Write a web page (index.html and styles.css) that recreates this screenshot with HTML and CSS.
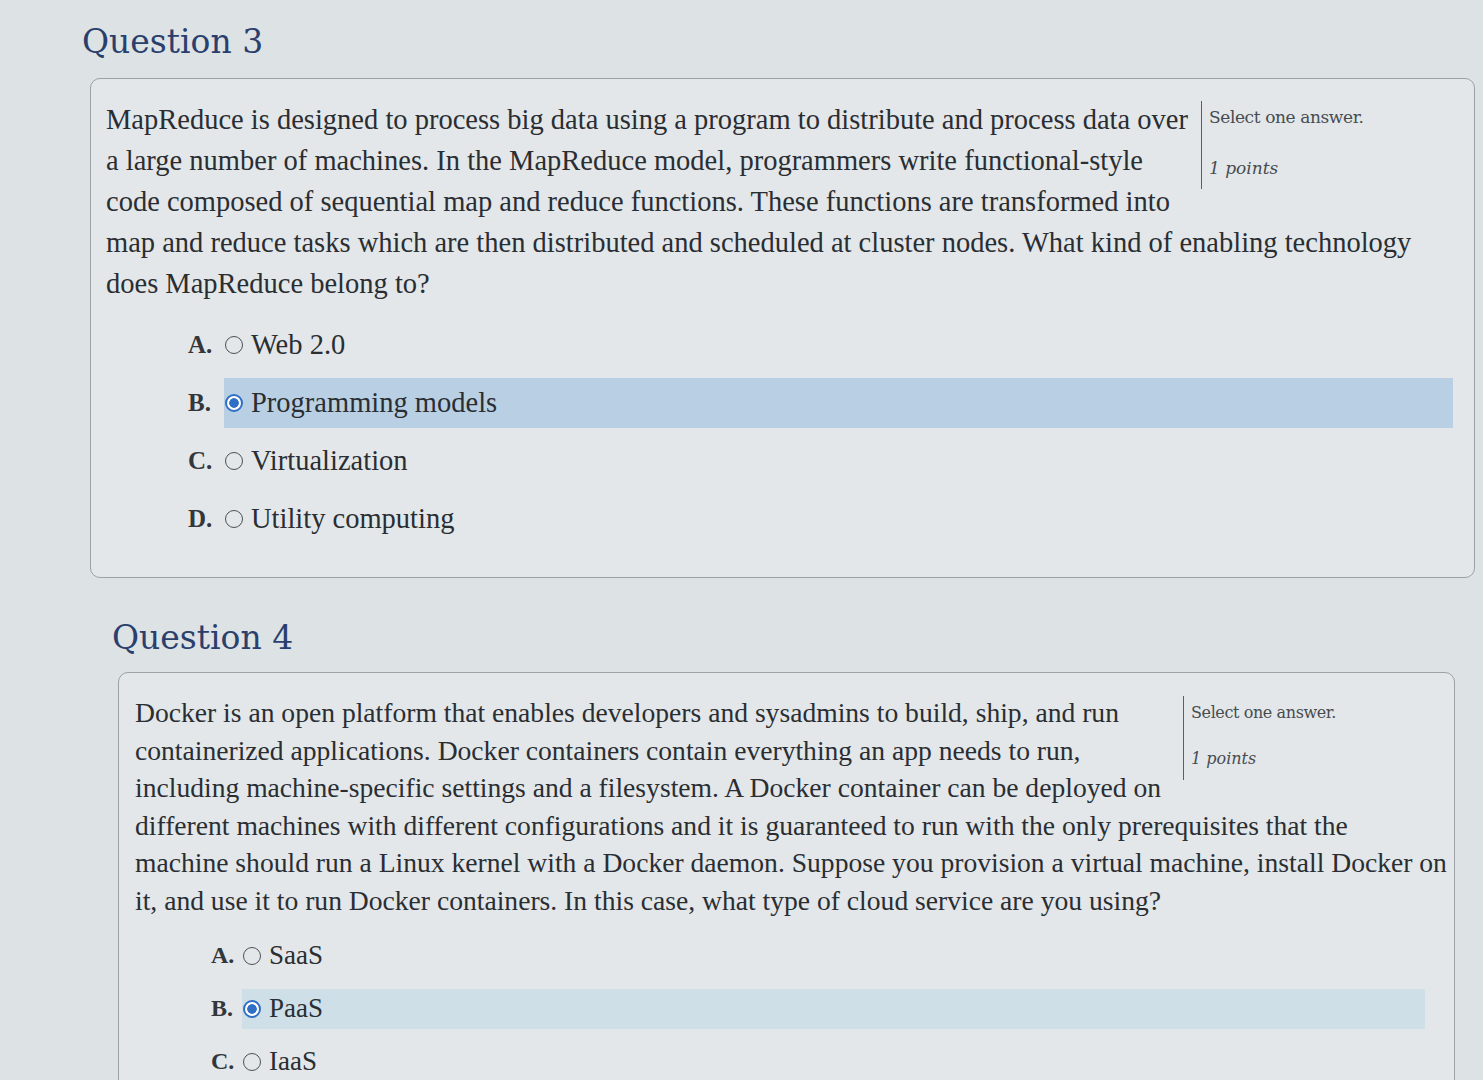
FILE: index.html
```html
<!DOCTYPE html>
<html lang="en">
<head>
<meta charset="UTF-8">
<meta name="viewport" content="width=device-width, initial-scale=1.0">
<link rel="stylesheet" href="styles.css">
</head>
<body>
    <div class="quiz">
        <div class="question">
            <h2 class="q-title">Question 3</h2>
            <div class="q-card">
                <div class="q-info">
                    <p class="q-hint">Select one answer.</p>
                    <p class="q-points">1 points</p>
                </div>
                <p class="q-text">MapReduce is designed to process big data using a program to distribute and process data over a large number of machines. In the MapReduce model, programmers write functional-style code composed of sequential map and reduce functions. These functions are transformed into map and reduce tasks which are then distributed and scheduled at cluster nodes. What kind of enabling technology does MapReduce belong to?</p>
                <div class="options">
                    <div class="option">
                        <span class="opt-letter">A.</span>
                        <label class="opt-body"><span class="radio"></span>Web 2.0</label>
                    </div>
                    <div class="option selected">
                        <span class="opt-letter">B.</span>
                        <label class="opt-body"><span class="radio"></span>Programming models</label>
                    </div>
                    <div class="option">
                        <span class="opt-letter">C.</span>
                        <label class="opt-body"><span class="radio"></span>Virtualization</label>
                    </div>
                    <div class="option">
                        <span class="opt-letter">D.</span>
                        <label class="opt-body"><span class="radio"></span>Utility computing</label>
                    </div>
                </div>
            </div>
        </div>

        <div class="question second">
            <h2 class="q-title">Question 4</h2>
            <div class="q-card">
                <div class="q-info">
                    <p class="q-hint">Select one answer.</p>
                    <p class="q-points">1 points</p>
                </div>
                <p class="q-text">Docker is an open platform that enables developers and sysadmins to build, ship, and run containerized applications. Docker containers contain everything an app needs to run, including machine-specific settings and a filesystem. A Docker container can be deployed on different machines with different configurations and it is guaranteed to run with the only prerequisites that the machine should run a Linux kernel with a Docker daemon. Suppose you provision a virtual machine, install Docker on it, and use it to run Docker containers. In this case, what type of cloud service are you using?</p>
                <div class="options">
                    <div class="option">
                        <span class="opt-letter">A.</span>
                        <label class="opt-body"><span class="radio"></span>SaaS</label>
                    </div>
                    <div class="option selected">
                        <span class="opt-letter">B.</span>
                        <label class="opt-body"><span class="radio"></span>PaaS</label>
                    </div>
                    <div class="option">
                        <span class="opt-letter">C.</span>
                        <label class="opt-body"><span class="radio"></span>IaaS</label>
                    </div>
                </div>
            </div>
        </div>
    </div>
</body>
</html>
```

FILE: styles.css
```css
body {
    margin: 0;
    background-color: #dde2e5;
    font-family: "Liberation Serif", "Times New Roman", serif;
    color: #2a2e33;
    overflow: hidden;
}

.quiz {
    padding: 22px 8px 0 82px;
}

.q-title {
    font-family: "DejaVu Serif", serif;
    font-weight: normal;
    font-size: 33px;
    line-height: 39px;
    color: #2a3f6c;
    margin: 0 0 17px 0;
}

.q-card {
    margin-left: 8px;
    border: 1px solid #9ba1a6;
    border-radius: 10px;
    background-color: #e3e7e9;
    padding: 20px 21px 29px 15px;
}

/* right column with hint and points */
.q-info {
    float: right;
    width: 244px;
    margin: 2px 0 10px 5px;
    padding: 5px 0 10px 7px;
    border-left: 1px solid #5b5f63;
}

.q-hint {
    margin: 0;
    font-family: "DejaVu Serif", serif;
    font-size: 17px;
    line-height: 22px;
    color: #474c51;
    letter-spacing: -0.4px;
}

.q-points {
    margin: 29px 0 0 0;
    font-family: "DejaVu Serif", serif;
    font-style: italic;
    font-size: 17px;
    line-height: 22px;
    color: #474c51;
}

.q-text {
    margin: 0;
    font-size: 28.5px;
    line-height: 41px;
}

.options {
    margin-top: 12px;
    clear: both;
}

.option {
    display: flex;
    align-items: center;
    height: 58px;
    margin-left: 82px;
}

.opt-letter {
    width: 36px;
    font-weight: bold;
    font-size: 25px;
    color: #33373b;
}

.opt-body {
    display: flex;
    align-items: center;
    gap: 8px;
    flex: 1;
    height: 50px;
    padding-left: 1px;
    font-size: 28.5px;
}

.radio {
    width: 18px;
    height: 18px;
    border: 1.5px solid #4c5156;
    border-radius: 50%;
    box-sizing: border-box;
}

.option.selected .opt-body {
    background-color: #b9d0e4;
}

.option.selected .radio {
    border: 2px solid #2f6fc4;
    background: radial-gradient(circle, #2f6fc4 0 45%, #ffffff 52%);
}

.second {
    margin: 40px 20px 0 30px;
}

.second .q-title {
    margin-bottom: 15px;
}

.second .q-card {
    margin-left: 6px;
    padding: 21px 7px 20px 16px;
}

.second .q-info {
    width: 256px;
    padding-top: 6px;
}

.second .q-hint,
.second .q-points {
    font-size: 16px;
}

.second .q-points {
    margin-top: 24px;
}

.second .q-text {
    font-size: 27.6px;
    line-height: 37.5px;
}

.second .options {
    margin-top: 10px;
}

.second .option {
    height: 53px;
    margin-left: 76px;
    margin-right: 22px;
}

.second .opt-letter {
    width: 31px;
    font-size: 24px;
}

.second .opt-body {
    height: 40px;
    font-size: 27px;
}

.second .option.selected .opt-body {
    background-color: #cfdfe8;
}
```
